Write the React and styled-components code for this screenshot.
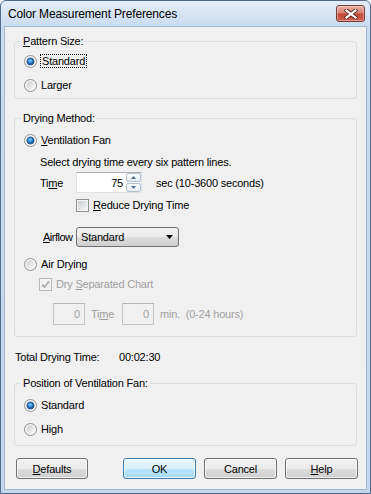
import React from 'react';
import styled, { createGlobalStyle } from 'styled-components';

const GlobalStyle = createGlobalStyle`
  html, body {
    margin: 0;
    padding: 0;
    background: #ffffff;
  }

  body {
    font-family: "Liberation Sans", Arial, sans-serif;
    font-size: 11px;
    letter-spacing: -0.2px;
    color: #000000;
  }
`;

const Window = styled.div`
  box-sizing: border-box;
  width: 371px;
  height: 494px;
  display: flex;
  flex-direction: column;
  padding: 0 3px 3px;
  border: 1px solid #4f6a8e;
  border-radius: 6px 6px 0 0;
  background: linear-gradient(#e3edf8, #c9dbf0 26px, #c4d7ee);
`;

const TitleBar = styled.div`
  height: 25px;
  display: flex;
  align-items: center;
  justify-content: space-between;
  padding: 0 2px 0 4px;
`;

const Title = styled.span`
  font-size: 12px;
  letter-spacing: -0.15px;
  color: #000000;
`;

const CloseButton = styled.div`
  box-sizing: border-box;
  width: 29px;
  height: 17px;
  display: flex;
  align-items: center;
  justify-content: center;
  border: 1px solid #7a3a34;
  border-radius: 3px;
  background: linear-gradient(#e9b3a8, #d77d6f 45%, #c34a3b 55%, #d0624f);
  box-shadow: inset 0 0 0 1px rgba(255, 255, 255, 0.35);
`;

const Client = styled.div`
  flex: 1;
  display: flex;
  flex-direction: column;
  background: #f0f0f0;
  border: 1px solid #a3b6cf;
`;

const Group = styled.fieldset`
  margin: ${p => p.$top}px 9px 0;
  padding: 0;
  min-width: 0;
  border: 1px solid #d5dfe5;
  border-radius: 3px;
`;

const Legend = styled.legend`
  margin-left: 6px;
  padding: 0 2px;
  line-height: 13px;
`;

const GroupBody = styled.div`
  display: flex;
  flex-direction: column;
  padding: ${p => p.$pt}px 0 ${p => p.$pb}px 9px;
`;

const Row = styled.div`
  display: flex;
  align-items: center;
  height: ${p => p.$h || 16}px;
  margin-top: ${p => p.$mt || 0}px;
  padding-left: ${p => p.$indent || 0}px;
  color: ${p => (p.$disabled ? '#a0a0a0' : '#000000')};
`;

const Label = styled.span`
  display: inline-block;
  width: ${p => (p.$w ? `${p.$w}px` : 'auto')};
  margin-left: ${p => p.$ml || 0}px;
  letter-spacing: ${p => (p.$tight ? '-0.5px' : 'inherit')};
  white-space: pre;
`;

const Key = styled.u`
  text-decoration-thickness: 1px;
  text-underline-offset: 1px;
`;

const FocusRing = styled.span`
  padding: 0 1px;
  outline: 1px dotted #000000;
  outline-offset: 0;
  line-height: 13px;
`;

const OptionText = styled.span`
  margin-left: 4px;
  white-space: pre;
`;

const EditBox = styled.div`
  box-sizing: border-box;
  width: ${p => p.$w}px;
  height: ${p => p.$h}px;
  display: flex;
  align-items: stretch;
  margin-left: ${p => p.$ml || 0}px;
  border: 1px solid ${p => (p.$disabled ? '#c5c5c5' : '#dde2e8')};
  border-top-color: ${p => (p.$disabled ? '#b5b5b5' : '#abadb3')};
  background: ${p => (p.$disabled ? '#f0f0f0' : '#ffffff')};
  color: ${p => (p.$disabled ? '#a0a0a0' : '#000000')};
`;

const EditValue = styled.span`
  flex: 1;
  display: flex;
  align-items: center;
  justify-content: flex-end;
  padding-right: ${p => p.$pr || 3}px;
`;

const Spin = styled.div`
  width: 15px;
  display: flex;
  flex-direction: column;
  gap: 1px;
`;

const SpinPart = styled.div`
  flex: 1;
  box-sizing: border-box;
  display: flex;
  align-items: center;
  justify-content: center;
  border: 1px solid #b4c1d2;
  border-radius: 2px;
  background: linear-gradient(#fbfcfd, #e6ebf1);
`;

const Combo = styled.div`
  box-sizing: border-box;
  width: 103px;
  height: 20px;
  display: flex;
  align-items: center;
  justify-content: space-between;
  padding: 0 5px 0 4px;
  border: 1px solid #707070;
  border-radius: 3px;
  background: linear-gradient(#f2f2f2, #ebebeb 50%, #dddddd 51%, #cfcfcf);
`;

const TotalRow = styled.div`
  display: flex;
  align-items: center;
  height: 16px;
  margin-top: 12px;
  padding-left: 10px;
`;

const ButtonRow = styled.div`
  display: flex;
  gap: 8px;
  margin-top: 12px;
  padding: 0 8px 0 11px;
`;

const Button = styled.div`
  box-sizing: border-box;
  width: ${p => p.$w || 73}px;
  height: 21px;
  display: flex;
  align-items: center;
  justify-content: center;
  margin-right: ${p => p.$mr || 0}px;
  border: 1px solid ${p => (p.$default ? '#3c7fb1' : '#707070')};
  border-radius: 3px;
  background: ${p => (p.$default
    ? 'linear-gradient(#eaf6fd, #d9f0fc 50%, #bee6fd 51%, #a7d9f5)'
    : 'linear-gradient(#f2f2f2, #ebebeb 50%, #dddddd 51%, #cfcfcf)')};
  box-shadow: inset 0 0 0 1px rgba(255, 255, 255, 0.7);
`;

const Radio = ({ checked }) => (
  <svg width="13" height="13" viewBox="0 0 13 13">
    <defs>
      <linearGradient id="radio-fill" x1="0" y1="0" x2="1" y2="1">
        <stop offset="0" stopColor="#cfcfcf" />
        <stop offset="1" stopColor="#fafafa" />
      </linearGradient>
      <radialGradient id="radio-dot" cx="0.45" cy="0.4" r="0.65">
        <stop offset="0" stopColor="#9ad8ff" />
        <stop offset="0.45" stopColor="#2a86d6" />
        <stop offset="1" stopColor="#0b3c6e" />
      </radialGradient>
    </defs>
    <circle cx="6.5" cy="6.5" r="6" fill="#f6f6f6" stroke="#8e8f8f" />
    <circle cx="6.5" cy="6.5" r="4.2" fill="url(#radio-fill)" />
    {checked && (
      <circle cx="6.5" cy="6.5" r="3.6" fill="url(#radio-dot)" stroke="#1b4d7c" strokeWidth="0.6" />
    )}
  </svg>
);

const Check = ({ checked, disabled }) => (
  <svg width="13" height="13" viewBox="0 0 13 13">
    <defs>
      <linearGradient id="check-fill" x1="0" y1="0" x2="1" y2="1">
        <stop offset="0" stopColor="#cbcfd5" />
        <stop offset="1" stopColor="#f6f6f6" />
      </linearGradient>
    </defs>
    <rect x="0.5" y="0.5" width="12" height="12" fill="#f4f4f4" stroke={disabled ? '#b8b8b8' : '#8e8f8f'} />
    <rect x="2" y="2" width="9" height="9" fill={disabled ? '#f0f0f0' : 'url(#check-fill)'} />
    {checked && (
      <path d="M3 6.6 L5.4 9 L10 3.6" fill="none" stroke={disabled ? '#a8a8a8' : '#1e3f6c'} strokeWidth="1.6" />
    )}
  </svg>
);

const Arrow = ({ up, color = '#000000', w = 7, h = 4 }) => (
  <svg width={w} height={h} viewBox={`0 0 ${w} ${h}`}>
    <path d={up ? `M0 ${h} L${w / 2} 0 L${w} ${h} Z` : `M0 0 L${w / 2} ${h} L${w} 0 Z`} fill={color} />
  </svg>
);

const CloseGlyph = () => (
  <svg width="14" height="10" viewBox="0 0 14 10">
    <path d="M2.5 1.5 L11.5 8.5 M11.5 1.5 L2.5 8.5" stroke="#5a2520" strokeWidth="4" strokeLinecap="square" />
    <path d="M2.5 1.5 L11.5 8.5 M11.5 1.5 L2.5 8.5" stroke="#ffffff" strokeWidth="2.2" strokeLinecap="square" />
  </svg>
);

const App = () => (
  <>
    <GlobalStyle />
    <Window>
      <TitleBar>
        <Title>Color Measurement Preferences</Title>
        <CloseButton>
          <CloseGlyph />
        </CloseButton>
      </TitleBar>

      <Client>
        <Group $top={8}>
          <Legend><Key>P</Key>attern Size:</Legend>
          <GroupBody $pt={5} $pb={5}>
            <Row>
              <Radio checked />
              <OptionText>
                <FocusRing>Standard</FocusRing>
              </OptionText>
            </Row>
            <Row $mt={8}>
              <Radio />
              <OptionText>Larger</OptionText>
            </Row>
          </GroupBody>
        </Group>

        <Group $top={13}>
          <Legend>Drying Method:</Legend>
          <GroupBody $pt={7} $pb={11}>
            <Row>
              <Radio checked />
              <OptionText><Key>V</Key>entilation Fan</OptionText>
            </Row>
            <Row $mt={6} $indent={16}>
              Select drying time every six pattern lines.
            </Row>
            <Row $mt={2} $h={21} $indent={16}>
              <Label $w={36}>Ti<Key>m</Key>e</Label>
              <EditBox $w={66} $h={21}>
                <EditValue>75</EditValue>
                <Spin>
                  <SpinPart><Arrow up w={5} h={3} color="#4f6d97" /></SpinPart>
                  <SpinPart><Arrow w={5} h={3} color="#4f6d97" /></SpinPart>
                </Spin>
              </EditBox>
              <Label $ml={14}>sec (10-3600 seconds)</Label>
            </Row>
            <Row $mt={4} $indent={52}>
              <Check />
              <OptionText><Key>R</Key>educe Drying Time</OptionText>
            </Row>
            <Row $mt={13} $h={21} $indent={19}>
              <Label $w={33} $tight><Key>A</Key>irflow</Label>
              <Combo>
                <span>Standard</span>
                <Arrow />
              </Combo>
            </Row>
            <Row $mt={9}>
              <Radio />
              <OptionText>Air Drying</OptionText>
            </Row>
            <Row $mt={4} $indent={15} $disabled>
              <Check checked disabled />
              <OptionText>Dry <Key>S</Key>eparated Chart</OptionText>
            </Row>
            <Row $mt={11} $h={22} $indent={29} $disabled>
              <EditBox $w={32} $h={22} $disabled>
                <EditValue $pr={4}>0</EditValue>
              </EditBox>
              <Label $w={31} $ml={6}>Ti<Key>m</Key>e</Label>
              <EditBox $w={32} $h={22} $disabled>
                <EditValue $pr={4}>0</EditValue>
              </EditBox>
              <Label $ml={6}>min.  (0-24 hours)</Label>
            </Row>
          </GroupBody>
        </Group>

        <TotalRow>
          <Label $w={104}>Total Drying Time:</Label>
          <span>00:02:30</span>
        </TotalRow>

        <Group $top={12}>
          <Legend>Position of Ventilation Fan:</Legend>
          <GroupBody $pt={7} $pb={8}>
            <Row>
              <Radio checked />
              <OptionText>Standard</OptionText>
            </Row>
            <Row $mt={8}>
              <Radio />
              <OptionText>High</OptionText>
            </Row>
          </GroupBody>
        </Group>

        <ButtonRow>
          <Button $w={72} $mr={27}><Key>D</Key>efaults</Button>
          <Button $default>OK</Button>
          <Button>Cancel</Button>
          <Button><Key>H</Key>elp</Button>
        </ButtonRow>
      </Client>
    </Window>
  </>
);

export default App;
